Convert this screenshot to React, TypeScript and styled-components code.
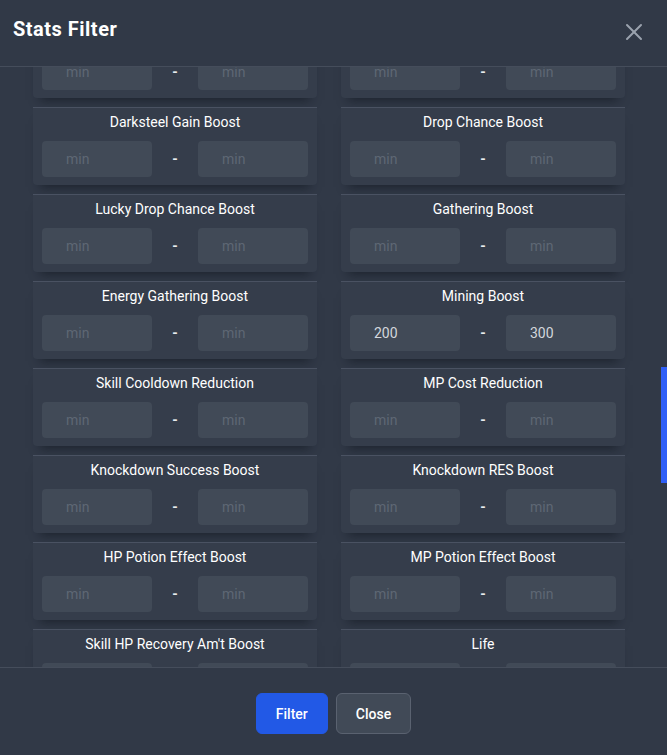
import { useLayoutEffect, useRef, useState } from "react";
import styled, { createGlobalStyle } from "styled-components";

interface Stat {
  name: string;
  min?: string;
  max?: string;
}

const hiddenAbove = [
  "HP", "MP", "PHYS ATK", "Spell ATK", "PHYS DEF", "Spell DEF",
  "Accuracy", "EVA", "CRIT", "CRIT EVA", "CRIT DMG Boost", "CRIT DMG Reduction",
  "PVP DMG Boost", "PVP DMG Reduction", "PVE DMG Boost", "PVE DMG Reduction",
  "Monster DMG Boost", "Monster DMG Reduction", "Boss DMG Boost", "Boss DMG Reduction",
  "Basic ATK DMG Boost", "Skill DMG Boost", "Skill DMG Reduction", "ATK Speed",
  "Movement Speed", "HP Recovery", "MP Recovery", "HP Absorb",
  "MP Absorb", "Stun RES", "Paralysis RES", "Silence RES",
  "Slow RES", "Bleed RES", "EXP Boost", "Copper Gain Boost",
];

const visible: Stat[] = [
  { name: "Darksteel Gain Boost" },
  { name: "Drop Chance Boost" },
  { name: "Lucky Drop Chance Boost" },
  { name: "Gathering Boost" },
  { name: "Energy Gathering Boost" },
  { name: "Mining Boost", min: "200", max: "300" },
  { name: "Skill Cooldown Reduction" },
  { name: "MP Cost Reduction" },
  { name: "Knockdown Success Boost" },
  { name: "Knockdown RES Boost" },
  { name: "HP Potion Effect Boost" },
  { name: "MP Potion Effect Boost" },
  { name: "Skill HP Recovery Am't Boost" },
  { name: "Life" },
];

const hiddenBelow = [
  "Courage", "Focus", "Ingenuity", "Perseverance", "Endurance", "Agility",
  "Wisdom", "Strength", "Spirit", "Vitality", "Debuff Duration Reduction",
  "Buff Duration Boost", "Stun Success Boost", "Paralysis Success Boost",
  "Silence Success Boost", "Slow Success Boost", "Bleed Success Boost",
  "Guard Break", "Guard", "Penetration",
];

const stats: Stat[] = [
  ...hiddenAbove.map((name) => ({ name })),
  ...visible,
  ...hiddenBelow.map((name) => ({ name })),
];

// row 18 (Darksteel Gain Boost) should sit 40px below the top of the list
const INITIAL_SCROLL = 1552;

const GlobalStyle = createGlobalStyle`
  html, body {
    margin: 0;
    padding: 0;
    background: #313947;
  }
  * {
    box-sizing: border-box;
  }
  body {
    font-family: Roboto, "Noto Sans", "Liberation Sans", sans-serif;
    color: #eef0f3;
  }
`;

const StatCell = ({ stat }: { stat: Stat }) => (
  <Cell>
    <Card>
      <Label>{stat.name}</Label>
      <Range>
        <Field placeholder="min" defaultValue={stat.min} />
        <Dash>-</Dash>
        <Field placeholder="min" defaultValue={stat.max} />
      </Range>
    </Card>
  </Cell>
);

export default function App() {
  const bodyRef = useRef<HTMLDivElement>(null);
  const [thumb, setThumb] = useState({ top: 0, height: 0 });

  const updateThumb = () => {
    const el = bodyRef.current;
    if (!el) return;
    const ratio = el.clientHeight / el.scrollHeight;
    setThumb({ top: el.scrollTop * ratio, height: el.clientHeight * ratio });
  };

  useLayoutEffect(() => {
    if (bodyRef.current) bodyRef.current.scrollTop = INITIAL_SCROLL;
    updateThumb();
  }, []);

  return (
    <Modal>
      <GlobalStyle />
      <Header>
        <Title>Stats Filter</Title>
        <CloseIcon aria-label="Close">
          <svg width="28" height="28" viewBox="0 0 24 24" fill="none" stroke="currentColor" strokeWidth="1.7" strokeLinecap="round">
            <path d="M18 6 6 18" />
            <path d="m6 6 12 12" />
          </svg>
        </CloseIcon>
      </Header>
      <BodyWrap>
        <Body ref={bodyRef} onScroll={updateThumb}>
          <Grid>
            {stats.map((s, i) => (
              <StatCell key={i} stat={s} />
            ))}
          </Grid>
        </Body>
        <Thumb style={{ top: thumb.top, height: thumb.height }} />
      </BodyWrap>
      <Footer>
        <Button $primary>Filter</Button>
        <Button>Close</Button>
      </Footer>
    </Modal>
  );
}

const Modal = styled.div`
  width: 667px;
  height: 755px;
  display: flex;
  flex-direction: column;
  background: #313947;
`;

const Header = styled.div`
  height: 67px;
  flex-shrink: 0;
  display: flex;
  justify-content: space-between;
  align-items: flex-start;
  padding: 16px 19px 0 13px;
  border-bottom: 1px solid #454d5b;
`;

const Title = styled.h2`
  margin: 0;
  font-size: 20px;
  line-height: 26px;
  font-weight: 700;
  letter-spacing: 0.5px;
  color: #ffffff;
`;

const CloseIcon = styled.button`
  border: none;
  background: none;
  padding: 0;
  margin-top: 2px;
  width: 28px;
  height: 28px;
  color: #9aa2ae;
  cursor: pointer;
`;

const BodyWrap = styled.div`
  position: relative;
  flex: 1;
  min-height: 0;
`;

const Body = styled.div`
  height: 100%;
  overflow-y: auto;
  scrollbar-width: none;

  &::-webkit-scrollbar {
    display: none;
  }
`;

const Thumb = styled.div`
  position: absolute;
  right: 0;
  width: 6px;
  background: #2f5ff7;
`;

const Grid = styled.div`
  display: grid;
  grid-template-columns: 1fr 1fr;
  column-gap: 24px;
  padding: 26px 42px 32px 33px;
`;

const Cell = styled.div`
  border-top: 1px solid #4a5262;
  padding-bottom: 9px;
`;

const Card = styled.div`
  background: #353d4b;
  border-radius: 0 0 4px 4px;
  padding: 0 9px 8px;
  box-shadow: 0 9px 10px -7px rgba(14, 18, 26, 0.6);
`;

const Label = styled.div`
  text-align: center;
  font-size: 14px;
  font-weight: 400;
  line-height: 20px;
  padding: 4px 0 9px;
  color: #ffffff;
  white-space: nowrap;
`;

const Range = styled.div`
  display: grid;
  grid-template-columns: 1fr 46px 1fr;
  align-items: center;
`;

const Field = styled.input`
  width: 100%;
  height: 36px;
  border: none;
  outline: none;
  border-radius: 4px;
  background: #414a57;
  padding: 0 0 0 24px;
  font-family: inherit;
  font-size: 14px;
  color: #d3d7dd;

  &::placeholder {
    color: #5e6774;
  }
`;

const Dash = styled.span`
  text-align: center;
  font-size: 14px;
  font-weight: 700;
  color: #e8ebef;
`;

const Footer = styled.div`
  height: 88px;
  flex-shrink: 0;
  border-top: 1px solid #454d5b;
  display: flex;
  justify-content: center;
  align-items: flex-start;
  gap: 8px;
  padding-top: 25px;
`;

const Button = styled.button<{ $primary?: boolean }>`
  height: 41px;
  padding: 0 19px;
  border-radius: 6px;
  font-family: inherit;
  font-size: 14px;
  font-weight: 500;
  color: #ffffff;
  cursor: pointer;
  background: ${(p) => (p.$primary ? "#2259e6" : "#414a57")};
  border: 1px solid ${(p) => (p.$primary ? "#2259e6" : "#5a6270")};
`;
